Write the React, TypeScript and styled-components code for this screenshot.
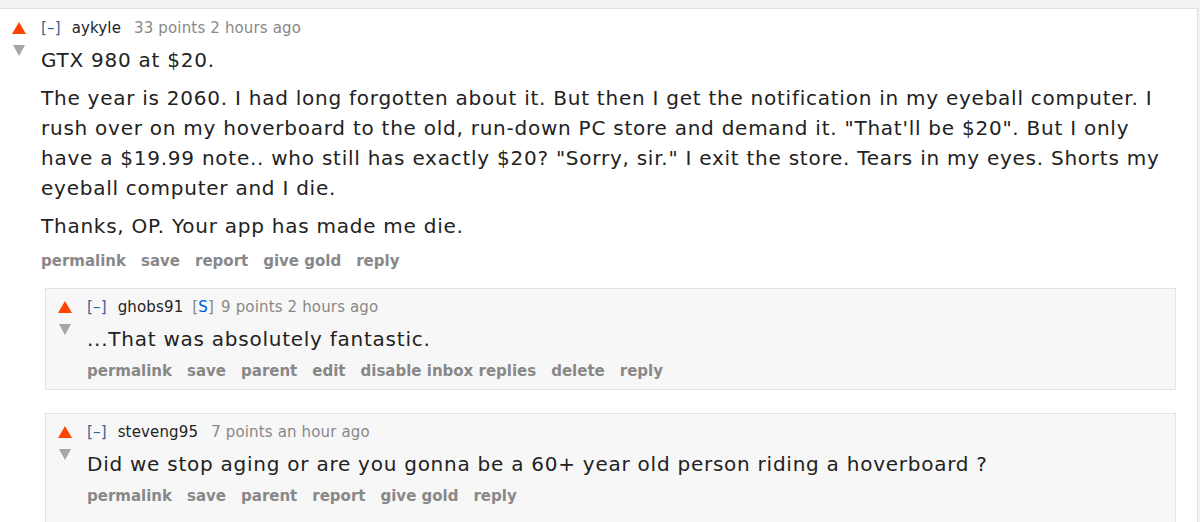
import React from "react";
import styled, { createGlobalStyle } from "styled-components";

const GlobalStyle = createGlobalStyle`
  html, body {
    margin: 0;
    padding: 0;
    background: #f2f2f2;
  }
  body {
    font-family: "DejaVu Sans", Verdana, sans-serif;
    color: #222;
  }
`;

const Page = styled.div`
  padding: 8px 2px 0 0;
`;

const Panel = styled.div`
  background: #fff;
  border-top: 1px solid #e2e2e2;
  border-right: 1px solid #e2e2e2;
  padding: 9px 21px 0 12px;
  min-height: 520px;
`;

const CommentBox = styled.div<{ $nested?: boolean }>`
  display: flex;
  ${(p) =>
    p.$nested &&
    `
    background: #f7f7f7;
    border: 1px solid #e3e3e3;
    padding: 8px 12px 8px 12px;
    margin-left: 4px;
    &:last-child {
      padding-bottom: 24px;
    }
  `}
`;

const VoteColumn = styled.div`
  width: 29px;
  flex-shrink: 0;
  display: flex;
  flex-direction: column;
  padding-top: 4px;
  gap: 11px;
`;

const Entry = styled.div`
  flex: 1;
  min-width: 0;
`;

const Tagline = styled.div`
  font-size: 15px;
  line-height: 20px;
  letter-spacing: 0.15px;
  color: #888;
`;

const Expand = styled.span`
  color: #369;
  margin-right: 11px;
`;

const Author = styled.span<{ $gap: number }>`
  color: #222;
  margin-right: ${(p) => p.$gap}px;
`;

const Submitter = styled.span`
  color: #888;
  margin-right: 7px;
  b {
    color: #0055df;
    font-weight: normal;
  }
`;

const Body = styled.div<{ $nested?: boolean }>`
  font-size: 20px;
  line-height: 30px;
  letter-spacing: 0.75px;
  color: #222;
  margin-top: 7px;
  p {
    margin: 0 0 8px 0;
  }
  p:last-child {
    margin-bottom: ${(p) => (p.$nested ? 7 : 10)}px;
  }
`;

const Buttons = styled.ul`
  list-style: none;
  margin: 0;
  padding: 0;
  display: flex;
  font-size: 15px;
  line-height: 20px;
  font-weight: bold;
  color: #888;
  li {
    margin-right: 15px;
  }
`;

const Children = styled.div`
  margin-top: 17px;
  display: flex;
  flex-direction: column;
  gap: 23px;
`;

const UpArrow = () => (
  <svg width="14" height="12" viewBox="0 0 14 12">
    <polygon points="7,0 14,12 0,12" fill="#ff4500" />
  </svg>
);

const DownArrow = () => (
  <svg width="12" height="11" viewBox="0 0 12 11" style={{ marginLeft: 1 }}>
    <polygon points="0,0 12,0 6,11" fill="#a6a6a6" />
  </svg>
);

interface IComment {
  author: string;
  submitter?: boolean;
  points: number;
  time: string;
  paragraphs: string[];
  buttons: string[];
  replies?: IComment[];
}

const data: IComment = {
  author: "aykyle",
  points: 33,
  time: "2 hours ago",
  paragraphs: [
    "GTX 980 at $20.",
    "The year is 2060. I had long forgotten about it. But then I get the notification in my eyeball computer. I rush over on my hoverboard to the old, run-down PC store and demand it. \"That'll be $20\". But I only have a $19.99 note.. who still has exactly $20? \"Sorry, sir.\" I exit the store. Tears in my eyes. Shorts my eyeball computer and I die.",
    "Thanks, OP. Your app has made me die.",
  ],
  buttons: ["permalink", "save", "report", "give gold", "reply"],
  replies: [
    {
      author: "ghobs91",
      submitter: true,
      points: 9,
      time: "2 hours ago",
      paragraphs: ["...That was absolutely fantastic."],
      buttons: ["permalink", "save", "parent", "edit", "disable inbox replies", "delete", "reply"],
    },
    {
      author: "steveng95",
      points: 7,
      time: "an hour ago",
      paragraphs: ["Did we stop aging or are you gonna be a 60+ year old person riding a hoverboard ?"],
      buttons: ["permalink", "save", "parent", "report", "give gold", "reply"],
    },
  ],
};

const Comment: React.FC<{ comment: IComment; nested?: boolean }> = ({ comment, nested }) => (
  <CommentBox $nested={nested}>
    <VoteColumn>
      <UpArrow />
      <DownArrow />
    </VoteColumn>
    <Entry>
      <Tagline>
        <Expand>[–]</Expand>
        <Author $gap={comment.submitter ? 9 : 13}>{comment.author}</Author>
        {comment.submitter && (
          <Submitter>
            [<b>S</b>]
          </Submitter>
        )}
        {comment.points} points {comment.time}
      </Tagline>
      <Body $nested={nested}>
        {comment.paragraphs.map((text) => (
          <p key={text}>{text}</p>
        ))}
      </Body>
      <Buttons>
        {comment.buttons.map((b) => (
          <li key={b}>{b}</li>
        ))}
      </Buttons>
      {comment.replies && (
        <Children>
          {comment.replies.map((r) => (
            <Comment key={r.author} comment={r} nested />
          ))}
        </Children>
      )}
    </Entry>
  </CommentBox>
);

const App = () => (
  <Page>
    <GlobalStyle />
    <Panel>
      <Comment comment={data} />
    </Panel>
  </Page>
);

export default App;
